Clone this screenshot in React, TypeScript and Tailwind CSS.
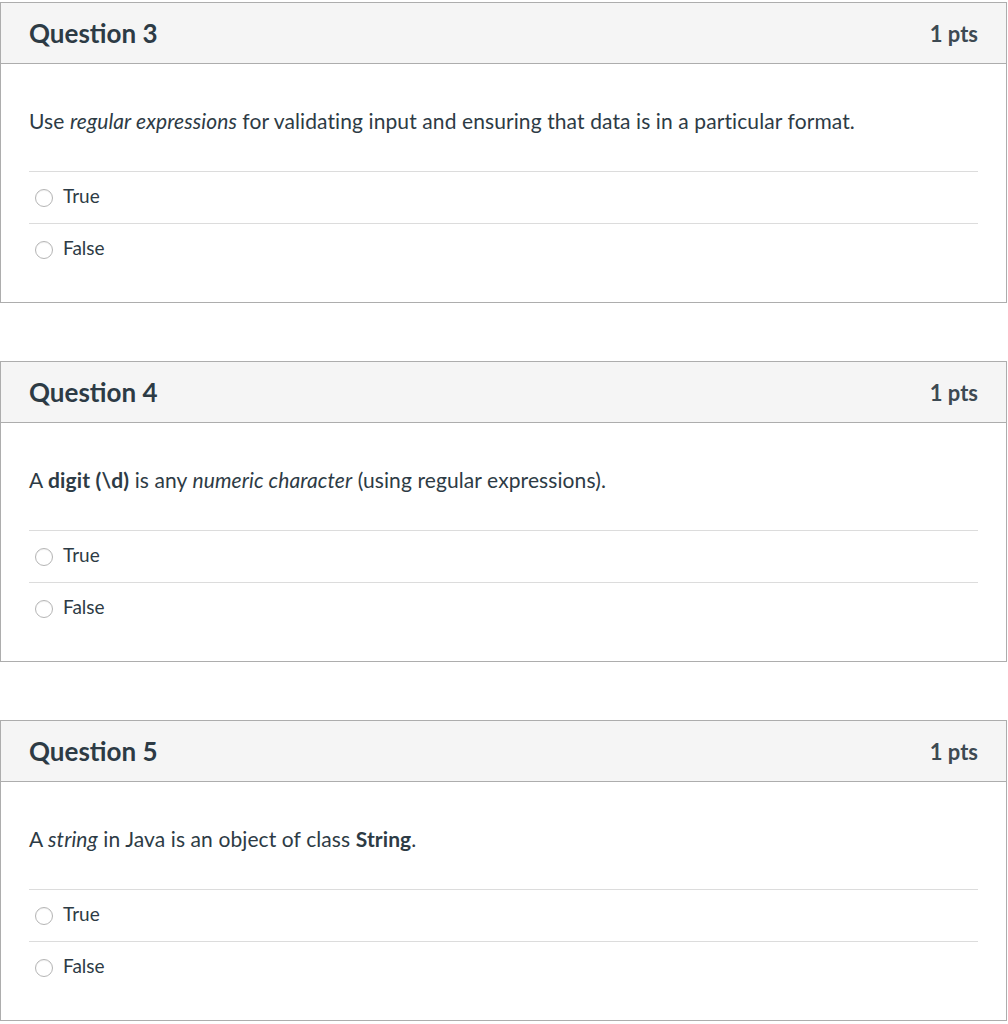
import type { ReactNode } from 'react';

const questions: { n: number; text: ReactNode }[] = [
  {
    n: 3,
    text: (
      <>
        Use <em>regular expressions</em> for validating input and ensuring that data is in a particular format.
      </>
    ),
  },
  {
    n: 4,
    text: (
      <>
        A <strong className="font-bold">digit</strong> <strong className="font-bold">(\d)</strong> is any{' '}
        <em>numeric character</em> (using regular expressions).
      </>
    ),
  },
  {
    n: 5,
    text: (
      <>
        A <em>string</em> in Java is an object of class <strong className="font-bold">String</strong>.
      </>
    ),
  },
];

export default function App() {
  return (
    <div className="w-[1008px] bg-white pt-[2px] font-['Lato','Liberation_Sans',sans-serif] text-[#2d3b45]">
      <div className="flex w-[1007px] flex-col gap-[58px]">
        {questions.map((q) => (
          <QuestionCard key={q.n} n={q.n} text={q.text} />
        ))}
      </div>
    </div>
  );
}

function QuestionCard({ n, text }: { n: number; text: ReactNode }) {
  return (
    <section className="h-[301px] border border-[#adadad]">
      <header className="flex h-[61px] items-center justify-between border-b border-[#adadad] bg-[#f5f5f5] pl-[28px] pr-[28px]">
        <h2 className="text-[26px] font-bold">Question {n}</h2>
        <span className="text-[22px] font-bold text-[#3d4a53]">1 pts</span>
      </header>
      <div className="px-[28px] pt-[43px]">
        <p className="text-[21px] leading-[28px] tracking-[0.1px]">{text}</p>
        <div className="mt-[36px]">
          <Option label="True" />
          <Option label="False" />
        </div>
      </div>
    </section>
  );
}

function Option({ label }: { label: string }) {
  return (
    <label className="flex h-[52px] items-center gap-[10px] border-t border-[#dcdcdc] pl-[6px]">
      <span className="h-[18px] w-[18px] rounded-full border border-[#b5b5b5] bg-white shadow-[inset_0_1px_1px_rgba(0,0,0,0.06)]" />
      <span className="mb-[2px] text-[19px]">{label}</span>
    </label>
  );
}
